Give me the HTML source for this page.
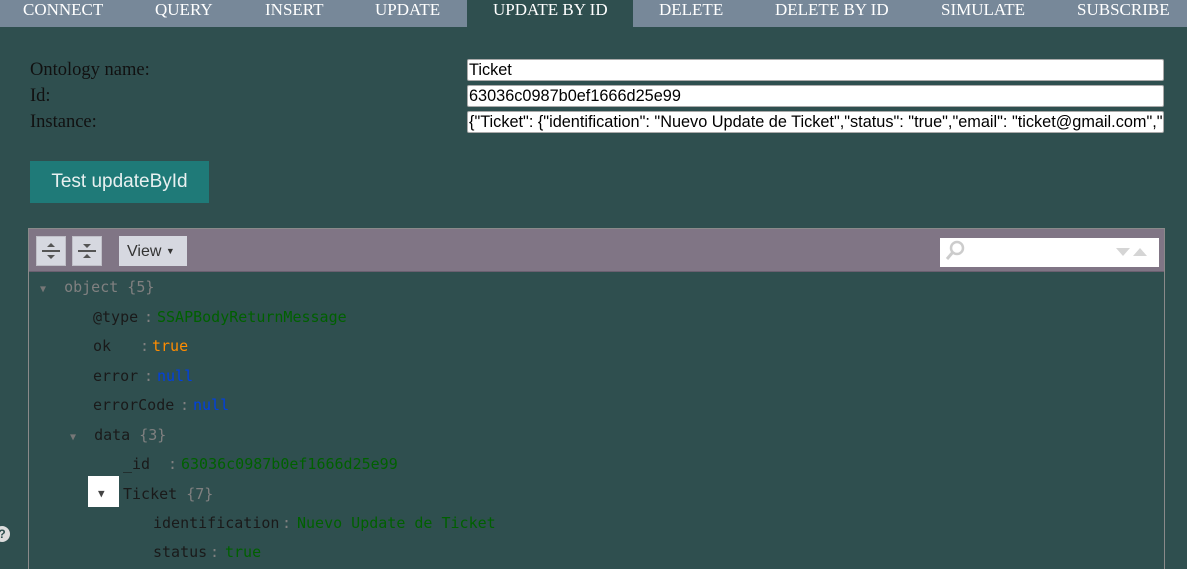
<!DOCTYPE html>
<html><head><meta charset="utf-8"><style>
body{margin:0;width:1187px;height:566px;overflow:hidden;background:#2f4f4f;font-family:"Liberation Serif",serif;position:relative}
.nav{position:absolute;left:0;top:0;width:1187px;height:27px;background:#778899}
.nav span{position:absolute;top:0px;color:#fff;font-size:17px;line-height:20px}
.act{position:absolute;left:467px;top:0;width:166px;height:27px;background:#2f4f4f}
.lbl{position:absolute;left:30px;font-size:18.5px;color:#111}
.in{position:absolute;left:467px;width:694px;height:20px;background:#fff;border:1px solid #aaa;border-radius:2px;font-family:"Liberation Sans",sans-serif;font-size:16.3px;line-height:20px;padding-left:1px;white-space:nowrap;overflow:hidden;color:#000}
.btn{position:absolute;left:30px;top:161px;width:179px;height:42px;background:#1f7a78;color:#e8f0f0;font-family:"Liberation Sans",sans-serif;font-size:19px;line-height:42px;text-align:center}
.ed{position:absolute;left:28px;top:228px;width:1135px;height:340px;border:1px solid #8a8a8a;border-bottom:none}
.menu{position:absolute;left:0;top:0;width:1135px;height:42px;background:#807585;border-bottom:1px solid #6a6070}
.ib{position:absolute;top:7px;width:30px;height:30px;background:#d6d8e0;border:1px solid #c0c0c8;box-sizing:border-box}
.view{position:absolute;left:90px;top:7px;width:68px;height:30px;background:#d6d8e0;box-sizing:border-box;font-family:"Liberation Sans",sans-serif;font-size:16px;color:#333;line-height:30px;padding-left:8px}
.srch{position:absolute;left:911px;top:9px;width:219px;height:29px;background:#fff}
.r{position:absolute;font-family:"DejaVu Sans Mono","Liberation Mono",monospace;font-size:15px;color:#1a1a1a;white-space:pre;line-height:18px}
.g{color:#808080}.s{color:#006000}.t{color:#ff8c00}.n{color:#0040e0}.c{color:#777}
</style></head><body>
<div class="nav">
<div class="act"></div>
<span style="left:23px">CONNECT</span><span style="left:155px">QUERY</span><span style="left:265px">INSERT</span><span style="left:375px">UPDATE</span><span style="left:493px">UPDATE BY ID</span><span style="left:659px">DELETE</span><span style="left:775px">DELETE BY ID</span><span style="left:941px">SIMULATE</span><span style="left:1077px">SUBSCRIBE</span>
</div>
<div class="lbl" style="top:60px">Ontology name:</div>
<div class="lbl" style="top:86px">Id:</div>
<div class="lbl" style="top:112px">Instance:</div>
<div class="in" style="top:59px">Ticket</div>
<div class="in" style="top:85px">63036c0987b0ef1666d25e99</div>
<div class="in" style="top:111px">{"Ticket": {"identification": "Nuevo Update de Ticket","status": "true","email": "ticket@gmail.com","</div>
<div class="btn">Test updateById</div>
<div class="ed">
<div class="menu">
<div class="ib" style="left:7px"><svg width="28" height="28" viewBox="0 0 28 28"><path d="M5 14h18" stroke="#555" stroke-width="2"/><path d="M10 10l4-4 4 4zM10 18l4 4 4-4z" fill="#555"/></svg></div>
<div class="ib" style="left:43px"><svg width="28" height="28" viewBox="0 0 28 28"><path d="M5 14h18" stroke="#555" stroke-width="2"/><path d="M10 7l4 4 4-4zM10 21l4-4 4 4z" fill="#555"/></svg></div>
<div class="view">View <span style="font-size:9px;vertical-align:2px">▼</span></div>
<div class="srch"><svg width="219" height="29"><circle cx="17" cy="10" r="6" fill="none" stroke="#ccc" stroke-width="2.5"/><path d="M13 14l-6 7" stroke="#ccc" stroke-width="3"/><path d="M176 10h14l-7 8zM193 18h14l-7-8z" fill="#d5d5d5"/></svg></div>
</div>
<div class="r" style="left:11px;top:49px"><span class="c" style="font-size:10px">▼</span>  <span class="g">object {5}</span></div>
<div class="r" style="left:64px;top:79px">@type</div>
<div class="r" style="left:64px;top:108px">ok</div>
<div class="r" style="left:64px;top:138px">error</div>
<div class="r" style="left:64px;top:167px">errorCode</div>
<div class="r" style="left:115px;top:79px"><span class="g">:</span></div>
<div class="r" style="left:128px;top:79px"><span class="s">SSAPBodyReturnMessage</span></div>
<div class="r" style="left:111px;top:108px"><span class="g">:</span></div>
<div class="r" style="left:123px;top:108px"><span class="t">true</span></div>
<div class="r" style="left:115px;top:138px"><span class="g">:</span></div>
<div class="r" style="left:128px;top:138px"><span class="n">null</span></div>
<div class="r" style="left:151px;top:167px"><span class="g">:</span></div>
<div class="r" style="left:164px;top:167px"><span class="n">null</span></div>
<div class="r" style="left:41px;top:197px"><span class="c" style="font-size:10px">▼</span>  data <span class="g">{3}</span></div>
<div class="r" style="left:94px;top:226px">_id</div>
<div class="r" style="left:139px;top:226px"><span class="g">:</span></div>
<div class="r" style="left:152px;top:226px"><span class="s">63036c0987b0ef1666d25e99</span></div>
<div style="position:absolute;left:59px;top:247px;width:31px;height:31px;background:#fff"></div>
<div class="r" style="left:69px;top:256px;font-size:11px;color:#444">▼</div>
<div class="r" style="left:94px;top:256px">Ticket <span class="g">{7}</span></div>
<div class="r" style="left:124px;top:285px">identification</div>
<div class="r" style="left:253px;top:285px"><span class="g">:</span></div>
<div class="r" style="left:268px;top:285px"><span class="s">Nuevo Update de Ticket</span></div>
<div class="r" style="left:124px;top:314px">status</div>
<div class="r" style="left:181px;top:314px"><span class="g">:</span></div>
<div class="r" style="left:196px;top:314px"><span class="s">true</span></div>
</div>
<div style="position:absolute;left:-6px;top:526px;width:16px;height:16px;border-radius:50%;background:#ddd;color:#2f4f4f;font:bold 12px 'Liberation Sans',sans-serif;text-align:center;line-height:16px">?</div>
</body></html>
